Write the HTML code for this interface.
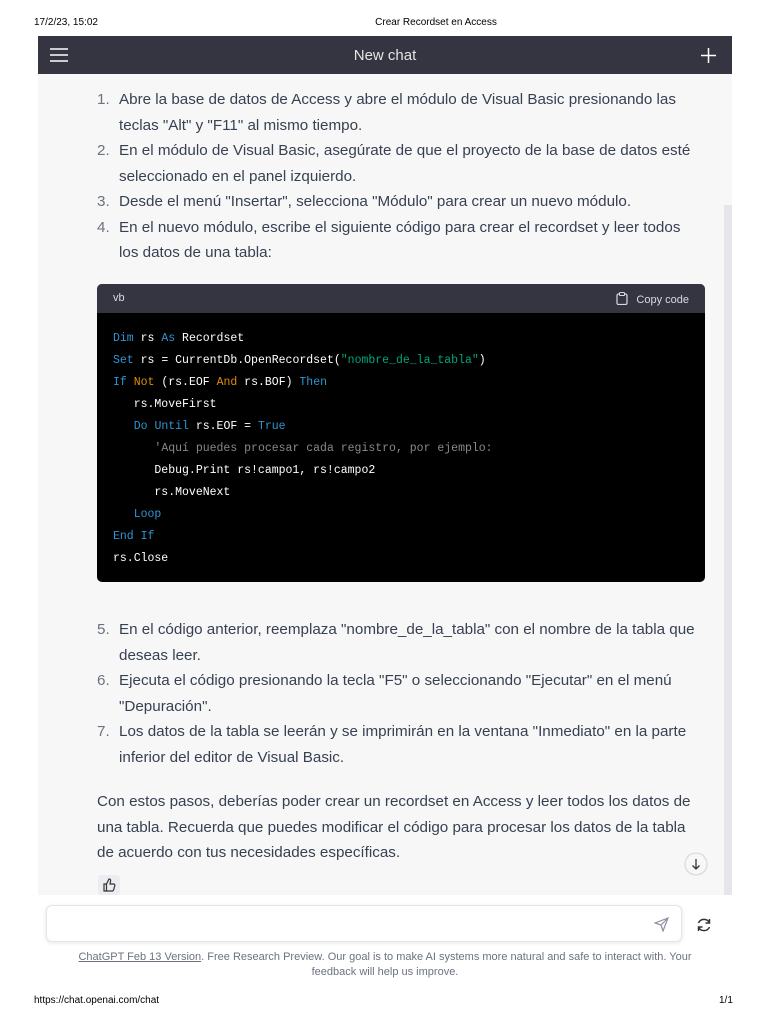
<!DOCTYPE html>
<html><head><meta charset="utf-8"><style>
*{margin:0;padding:0;box-sizing:border-box}
body{width:768px;height:1024px;background:#fff;font-family:"Liberation Sans",sans-serif;position:relative;overflow:hidden}
.top{position:absolute;top:17px;font-size:10px;color:#000}
.nav{position:absolute;left:38px;top:36px;width:694px;height:38px;background:#343541;color:#fff}
.nav .t{position:absolute;width:100%;text-align:center;top:11px;font-size:15px;color:#e5e5e5}
.content{position:absolute;left:38px;top:74px;width:694px;height:821px;background:#f7f7f8}
.sb{position:absolute;left:724px;top:205px;width:8px;height:690px;background:#e5e5ea}
.txt{position:absolute;left:97px;width:640px;font-size:15.2px;line-height:25.5px;color:#374151;white-space:nowrap}
ol{list-style:none}
ol li{position:relative;padding-left:22px}
ol li span{position:absolute;left:0;color:#6b7280}
.code{position:absolute;left:97px;top:284px;width:608px;height:298px;background:#000;border-radius:5px;overflow:hidden}
.ch{height:29px;background:#343541;color:#d9d9e3;font-size:11px;padding:8px 16px;position:relative}
.ch .cp{position:absolute;right:16px;top:8px}
pre{font-family:"Liberation Mono",monospace;font-size:11.5px;line-height:22px;color:#fff;padding:15px 16px}
.k{color:#2e95d3}.o{color:#f22c3d}.y{color:#df8b0b}.s{color:#00a67d}.c{color:#888}
.inp{position:absolute;left:46px;top:905px;width:636px;height:37px;background:#fff;border:1px solid #e5e5e5;border-radius:6px;box-shadow:0 1px 4px rgba(0,0,0,.1)}
.foot{position:absolute;left:38px;width:694px;top:950px;text-align:center;font-size:11px;line-height:15px;color:#6b7280;white-space:nowrap}
</style></head><body>
<div class="top" style="left:34px">17/2/23, 15:02</div>
<div class="top" style="left:0;width:872px;text-align:center">Crear Recordset en Access</div>
<div class="nav">
<svg style="position:absolute;left:12px;top:11px" width="18" height="16"><path d="M0 2H18M0 8H18M0 14H18" stroke="#fff" stroke-width="1.6"/></svg>
<div class="t">New chat</div>
<svg style="position:absolute;right:16px;top:12px" width="15" height="15"><path d="M7.5 0V15M0 7.5H15" stroke="#fff" stroke-width="1.5"/></svg>
</div>
<div class="content"></div>
<div class="sb"></div>
<div class="txt" style="top:87px"><ol>
<li><span>1.</span>Abre la base de datos de Access y abre el módulo de Visual Basic presionando las<br>teclas "Alt" y "F11" al mismo tiempo.</li>
<li><span>2.</span>En el módulo de Visual Basic, asegúrate de que el proyecto de la base de datos esté<br>seleccionado en el panel izquierdo.</li>
<li><span>3.</span>Desde el menú "Insertar", selecciona "Módulo" para crear un nuevo módulo.</li>
<li><span>4.</span>En el nuevo módulo, escribe el siguiente código para crear el recordset y leer todos<br>los datos de una tabla:</li>
</ol></div>
<div class="code">
<div class="ch">vb<span class="cp"><svg width="12" height="13" style="vertical-align:-2px;margin-right:8px"><rect x="1" y="2" width="10" height="10.5" rx="1.5" fill="none" stroke="#d9d9e3" stroke-width="1.2"/><rect x="3.5" y="0.5" width="5" height="3" rx="0.8" fill="#343541" stroke="#d9d9e3" stroke-width="1"/></svg>Copy code</span></div>
<pre><span class="k">Dim</span> rs <span class="k">As</span> Recordset
<span class="k">Set</span> rs = CurrentDb.OpenRecordset(<span class="s">"nombre_de_la_tabla"</span>)
<span class="k">If</span> <span class="y">Not</span> (rs.EOF <span class="y">And</span> rs.BOF) <span class="k">Then</span>
   rs.MoveFirst
   <span class="k">Do</span> <span class="k">Until</span> rs.EOF = <span class="k">True</span>
      <span class="c">'Aquí puedes procesar cada registro, por ejemplo:</span>
      Debug.Print rs!campo1, rs!campo2
      rs.MoveNext
   <span class="k">Loop</span>
<span class="k">End</span> <span class="k">If</span>
rs.Close</pre>
</div>
<div class="txt" style="top:617px"><ol>
<li><span>5.</span>En el código anterior, reemplaza "nombre_de_la_tabla" con el nombre de la tabla que<br>deseas leer.</li>
<li><span>6.</span>Ejecuta el código presionando la tecla "F5" o seleccionando "Ejecutar" en el menú<br>"Depuración".</li>
<li><span>7.</span>Los datos de la tabla se leerán y se imprimirán en la ventana "Inmediato" en la parte<br>inferior del editor de Visual Basic.</li>
</ol></div>
<div class="txt" style="top:789px">Con estos pasos, deberías poder crear un recordset en Access y leer todos los datos de<br>una tabla. Recuerda que puedes modificar el código para procesar los datos de la tabla<br>de acuerdo con tus necesidades específicas.</div>
<svg style="position:absolute;left:98px;top:875px" width="22" height="20"><rect width="22" height="20" rx="3" fill="#ececf1"/><path d="M6 9h2.5v7H6zM8.5 9l2.5-5c1.2 0 1.8.8 1.6 2L12 9h3.5c.9 0 1.5.8 1.3 1.6l-1.2 4.3c-.2.7-.8 1.1-1.5 1.1H8.5" fill="none" stroke="#333" stroke-width="1.2"/></svg>
<svg style="position:absolute;left:684px;top:852px" width="24" height="24"><circle cx="12" cy="12" r="11" fill="#f7f7f8" stroke="#d1d5db"/><path d="M12 7v10M8.5 13.5 12 17l3.5-3.5" fill="none" stroke="#333" stroke-width="1.3"/></svg>
<div class="inp"><svg style="position:absolute;right:12px;top:11px" width="15" height="15"><path d="M14 1 1 6l6 2 2 6zM14 1 7 8" fill="none" stroke="#8e8ea0" stroke-width="1.2"/></svg></div>
<svg style="position:absolute;left:696px;top:917px" width="16" height="16"><path d="M13.5 6A6 6 0 0 0 2.5 6M2.5 10a6 6 0 0 0 11 0M13.5 2v4h-4M2.5 14v-4h4" fill="none" stroke="#333" stroke-width="1.5"/></svg>
<div class="foot"><u>ChatGPT Feb 13 Version</u>. Free Research Preview. Our goal is to make AI systems more natural and safe to interact with. Your<br>feedback will help us improve.</div>
<div class="top" style="left:34px;top:995px">https://chat.openai.com/chat</div>
<div class="top" style="left:719px;top:995px">1/1</div>
</body></html>
